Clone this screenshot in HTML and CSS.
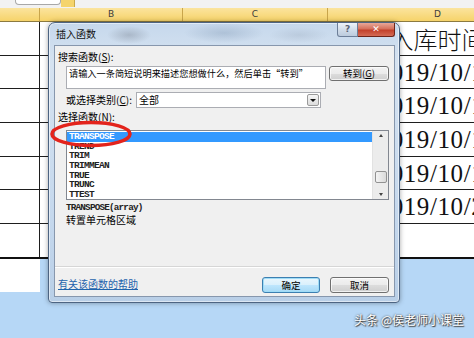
FILE: index.html
```html
<!DOCTYPE html>
<html lang="zh-CN">
<head>
    <meta charset="UTF-8">
    <meta name="viewport" content="width=device-width, initial-scale=1.0">
    <title>插入函数</title>
    <link rel="stylesheet" href="styles.css">
</head>
<body>
    <div class="sheet">
        <div class="topbar">
            <div class="namebox"></div>
            <div class="fxbox"></div>
        </div>
        <div class="colhead">
            <div class="ch"></div>
            <div class="ch">B</div>
            <div class="ch">C</div>
            <div class="ch">D</div>
        </div>
        <div class="row">
            <div class="cell"></div><div class="cell"></div><div class="cell"></div>
            <div class="cell date cjk">入库时间</div>
        </div>
        <div class="row short">
            <div class="cell"></div><div class="cell"></div><div class="cell"></div>
            <div class="cell date">2019/10/18</div>
        </div>
        <div class="row">
            <div class="cell"></div><div class="cell"></div><div class="cell"></div>
            <div class="cell date">2019/10/18</div>
        </div>
        <div class="row">
            <div class="cell"></div><div class="cell"></div><div class="cell"></div>
            <div class="cell date">2019/10/19</div>
        </div>
        <div class="row short">
            <div class="cell"></div><div class="cell"></div><div class="cell"></div>
            <div class="cell date">2019/10/19</div>
        </div>
        <div class="row">
            <div class="cell"></div><div class="cell"></div><div class="cell"></div>
            <div class="cell date">2019/10/20</div>
        </div>
        <div class="row last">
            <div class="cell"></div><div class="cell"></div><div class="cell"></div>
            <div class="cell"></div>
        </div>
        <div class="below">
            <div class="below-a"></div>
        </div>
    </div>

    <div class="dialog">
        <div class="titlebar">
            <div class="title">插入函数</div>
            <div class="caption-btns">
                <div class="cap-help">?</div>
                <div class="cap-close">✕</div>
            </div>
        </div>
        <div class="panel">
            <div class="label">搜索函数(<u>S</u>):</div>
            <div class="search-row">
                <div class="search-box">请输入一条简短说明来描述您想做什么，然后单击“转到”</div>
                <div class="btn go">转到(<u>G</u>)</div>
            </div>
            <div class="cat-row">
                <div class="cat-label">或选择类别(<u>C</u>):</div>
                <div class="select">
                    <span>全部</span>
                    <div class="select-arrow"><span class="tri-down"></span></div>
                </div>
            </div>
            <div class="label label-fn">选择函数(<u>N</u>):</div>
            <div class="listbox">
                <div class="items">
                    <div class="item selected">TRANSPOSE</div>
                    <div class="item">TREND</div>
                    <div class="item">TRIM</div>
                    <div class="item">TRIMMEAN</div>
                    <div class="item">TRUE</div>
                    <div class="item">TRUNC</div>
                    <div class="item">TTEST</div>
                </div>
                <div class="scrollbar">
                    <div class="sb-btn"><span class="tri-up small"></span></div>
                    <div class="sb-gap"></div>
                    <div class="sb-thumb"></div>
                    <div class="sb-fill"></div>
                    <div class="sb-btn"><span class="tri-down small"></span></div>
                </div>
            </div>
            <div class="syntax">TRANSPOSE(array)</div>
            <div class="desc">转置单元格区域</div>
            <div class="footer">
                <div class="help-link">有关该函数的帮助</div>
                <div class="btn ok">确定</div>
                <div class="btn cancel">取消</div>
            </div>
        </div>
    </div>

    <svg class="mark" width="92" height="32" viewBox="0 0 92 32">
        <ellipse cx="43" cy="14" rx="39" ry="11.5" fill="none" stroke="#e3241c" stroke-width="3.6"/>
    </svg>

    <div class="watermark">头条 @侯老师小课堂</div>
</body>
</html>
```

FILE: styles.css
```css
html, body {
    margin: 0;
    padding: 0;
    overflow: hidden;
}
body {
    width: 474px;
    height: 338px;
    position: relative;
    background-color: #b6d7f6;
    font-family: "Noto Sans CJK SC", sans-serif;
    color: #000;
}
.sheet {
    width: 548px;
}
.topbar {
    height: 8px;
    background-color: #f2f2f2;
    display: flex;
    padding-left: 15px;
}
.namebox {
    width: 44px;
    height: 4px;
    border: 1px solid #a8a8a8;
    border-top: none;
    border-radius: 0 0 4px 4px;
    background-color: #fff;
}
.fxbox {
    width: 13px;
    height: 7px;
    background-color: #f5d46c;
    border-right: 1px solid #c9a84a;
}
.colhead {
    display: grid;
    grid-template-columns: 40px 143px 145px 220px;
    height: 13px;
    background: linear-gradient(#fbe49e, #f6d36a);
    border-bottom: 1px solid #8c7a40;
}
.ch {
    border-right: 1px solid #c9a54b;
    font-family: "DejaVu Sans", sans-serif;
    font-size: 9px;
    line-height: 13px;
    color: #3c3c3c;
    text-align: center;
}
.row {
    display: grid;
    grid-template-columns: 40px 143px 145px 220px;
    height: 33px;
    border-bottom: 1px solid #1e1e1e;
    background-color: #fff;
}
.row.short {
    height: 32px;
}
.row.last {
    border-bottom: 2px solid #111;
}
.cell {
    border-right: 1px solid #1e1e1e;
}
.date {
    font-family: "Liberation Serif", serif;
    font-size: 25px;
    letter-spacing: 0.6px;
    line-height: 33px;
    text-align: center;
    color: #111;
    white-space: nowrap;
    overflow: hidden;
}
.date.cjk {
    font-family: "Noto Sans CJK SC", sans-serif;
    font-size: 24px;
    letter-spacing: 0;
    font-weight: 300;
}
.below {
    display: flex;
}
.below-a {
    width: 40px;
    height: 33px;
    background-color: #fff;
}

/* dialog */
.dialog {
    position: absolute;
    left: 48px;
    top: 22px;
    width: 352px;
    height: 281px;
    box-sizing: border-box;
    border: 1px solid #4d6482;
    border-radius: 7px 7px 4px 4px;
    padding: 0 4px 5px 5px;
    display: flex;
    flex-direction: column;
    background:
        radial-gradient(ellipse 22px 9px at 80px 12px, rgba(120, 130, 145, 0.4), transparent),
        radial-gradient(ellipse 40px 10px at 175px 10px, rgba(110, 135, 165, 0.3), transparent),
        radial-gradient(ellipse 30px 8px at 250px 12px, rgba(150, 165, 185, 0.3), transparent),
        linear-gradient(#c6d8ec, #d6e3f1 40px, #c5d8ed 70%, #b9cfe7);
    box-shadow: 0 0 5px rgba(0, 0, 0, 0.35), inset 0 0 0 1px rgba(255, 255, 255, 0.5);
}
.titlebar {
    height: 22px;
    display: flex;
    align-items: flex-start;
}
.title {
    font-size: 10px;
    line-height: 12px;
    padding: 5px 0 0 2px;
    color: #111;
}
.caption-btns {
    margin-left: auto;
    display: flex;
}
.cap-help {
    width: 19px;
    height: 13px;
    border: 1px solid #6c7e98;
    border-top: none;
    border-radius: 0 0 0 3px;
    background: linear-gradient(#eef3f9, #d2ddea 50%, #bccbdd);
    font-family: "DejaVu Sans", sans-serif;
    font-size: 9px;
    font-weight: bold;
    line-height: 13px;
    text-align: center;
    color: #5a6474;
}
.cap-close {
    width: 36px;
    height: 13px;
    border: 1px solid #6e2419;
    border-top: none;
    border-left: none;
    border-radius: 0 0 3px 0;
    background: linear-gradient(#e8a899, #d5705c 45%, #c3412b 55%, #d46b55);
    font-family: "DejaVu Sans", sans-serif;
    font-size: 9px;
    font-weight: bold;
    line-height: 13px;
    text-align: center;
    color: #fff;
}
.panel {
    flex: 1;
    background-color: #f0f0f0;
    border: 1px solid #8797ad;
    padding: 0 5px 0 3px;
    display: flex;
    flex-direction: column;
    font-size: 10px;
}
.label {
    margin-top: 5px;
    line-height: 12px;
    height: 12px;
}
.label-fn {
    margin-top: 3px;
}
.search-row {
    margin: 3px 0 0 8px;
    display: flex;
    align-items: flex-start;
}
.search-box {
    width: 260px;
    height: 23px;
    box-sizing: border-box;
    border: 1px solid #abadb3;
    background-color: #fff;
    padding: 0 2px;
    font-size: 9.2px;
    line-height: 13px;
    white-space: nowrap;
    overflow: hidden;
}
.btn {
    box-sizing: border-box;
    border: 1px solid #707070;
    border-radius: 3px;
    background: linear-gradient(#f3f3f3, #ebebeb 50%, #dddddd 51%, #cfcfcf);
    font-size: 9.5px;
    text-align: center;
    box-shadow: inset 0 0 0 1px rgba(255, 255, 255, 0.7);
}
.btn.go {
    width: 60px;
    height: 15px;
    line-height: 13px;
    margin-left: 3px;
}
.cat-row {
    margin: 3px 0 0 8px;
    display: flex;
    align-items: center;
}
.cat-label {
    width: 70px;
    line-height: 12px;
}
.select {
    width: 185px;
    height: 16px;
    box-sizing: border-box;
    border: 1px solid #abadb3;
    background-color: #fff;
    display: flex;
    align-items: center;
    padding-left: 2px;
    line-height: 14px;
}
.select-arrow {
    margin-left: auto;
    width: 12px;
    height: 12px;
    margin-right: 1px;
    border: 1px solid #9a9a9a;
    border-radius: 2px;
    box-sizing: border-box;
    background: linear-gradient(#f6f6f6, #dcdcdc);
    display: flex;
    justify-content: center;
    align-items: center;
}
.tri-down {
    width: 0;
    height: 0;
    border-left: 3px solid transparent;
    border-right: 3px solid transparent;
    border-top: 3px solid #111;
}
.tri-up {
    width: 0;
    height: 0;
    border-left: 3px solid transparent;
    border-right: 3px solid transparent;
    border-bottom: 3px solid #111;
}
.small {
    border-left-width: 2px;
    border-right-width: 2px;
    border-top-color: #444;
    border-bottom-color: #444;
}
.listbox {
    margin: 7px 0 0 8px;
    width: 323px;
    height: 70px;
    box-sizing: border-box;
    border: 1px solid #828790;
    background-color: #fff;
    display: flex;
}
.items {
    flex: 1;
    padding-top: 1px;
}
.item {
    height: 9.7px;
    line-height: 9.7px;
    padding-left: 2px;
    font-family: "Liberation Mono", monospace;
    font-size: 9.5px;
    letter-spacing: -0.7px;
    font-weight: bold;
    color: #222;
}
.item.selected {
    background-color: #3399ff;
    color: #fff;
}
.scrollbar {
    width: 15px;
    background-color: #ececec;
    border-left: 1px solid #e2e2e2;
    display: flex;
    flex-direction: column;
    align-items: center;
}
.sb-btn {
    height: 9px;
    display: flex;
    align-items: center;
    justify-content: center;
}
.sb-gap {
    height: 31px;
}
.sb-thumb {
    width: 12px;
    height: 12px;
    box-sizing: border-box;
    border: 1px solid #929292;
    border-radius: 2px;
    background: linear-gradient(90deg, #f4f4f4, #dadada);
}
.sb-fill {
    flex: 1;
}
.syntax {
    margin: 3px 0 0 8px;
    font-family: "Liberation Mono", monospace;
    font-size: 9.3px;
    letter-spacing: -0.8px;
    font-weight: bold;
    line-height: 10px;
    color: #222;
}
.desc {
    margin-left: 8px;
    line-height: 13px;
    font-size: 10px;
}
.footer {
    margin: auto -5px 0 -3px;
    padding: 10px 5px 3px 3px;
    border-top: 1px solid #d6d6d6;
    box-shadow: inset 0 1px 0 #fff;
    display: flex;
    align-items: center;
}
.help-link {
    color: #1f64ad;
    text-decoration: underline;
    line-height: 12px;
    margin-right: auto;
    margin-top: -2px;
}
.btn.ok {
    width: 58px;
    height: 16px;
    line-height: 14px;
    border-color: #3c7fb1;
    box-shadow: inset 0 0 0 1px #9fdcf6;
    background: linear-gradient(#eaf6fd, #d9f0fc 50%, #bee6fd 51%, #a7d9f5);
}
.btn.cancel {
    width: 59px;
    height: 16px;
    line-height: 14px;
    margin-left: 10px;
}
.mark {
    position: absolute;
    left: 48px;
    top: 120px;
}
.watermark {
    position: absolute;
    right: 10px;
    bottom: 11px;
    font-size: 12px;
    line-height: 14px;
    color: #fff;
    text-shadow: 0 0 2px #333, 1px 1px 1px #444;
}
```
